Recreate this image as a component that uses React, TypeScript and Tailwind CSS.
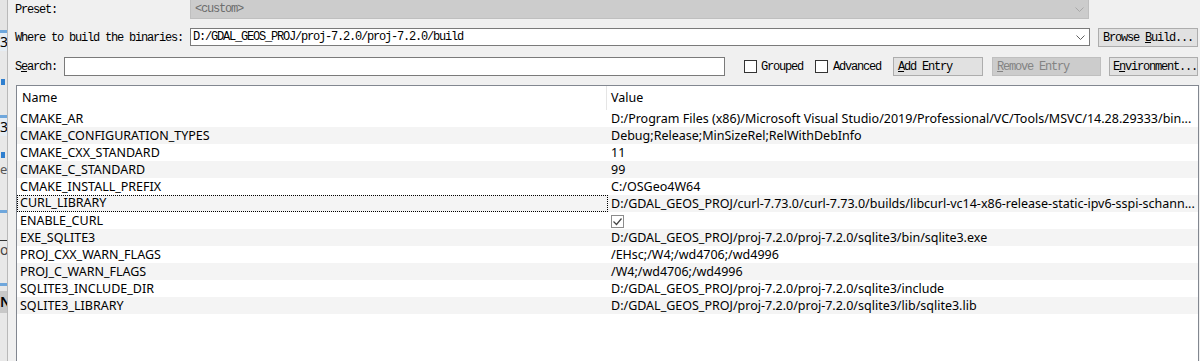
import React from "react";

const mono = "font-['Liberation_Mono',monospace] text-[12px] tracking-[-1.2px] text-black";
const sans = "font-['Noto_Sans',sans-serif] text-[12.5px] text-black";

function Chevron({ color }: { color: string }) {
  return (
    <svg width="9" height="5" viewBox="0 0 9 5" className="shrink-0">
      <polyline points="0.5,0.5 4.5,4.5 8.5,0.5" fill="none" stroke={color} strokeWidth="1" />
    </svg>
  );
}

function Check() {
  return (
    <div className="w-[13px] h-[13px] border border-[#8c8c8c] bg-white flex items-center justify-center">
      <svg width="11" height="11" viewBox="0 0 11 11">
        <polyline points="1.5,5.5 4.5,8.5 9.5,2.5" fill="none" stroke="#444" strokeWidth="1.2" />
      </svg>
    </div>
  );
}

const rows: [string, string | null][] = [
  ["CMAKE_AR", "D:/Program Files (x86)/Microsoft Visual Studio/2019/Professional/VC/Tools/MSVC/14.28.29333/bin..."],
  ["CMAKE_CONFIGURATION_TYPES", "Debug;Release;MinSizeRel;RelWithDebInfo"],
  ["CMAKE_CXX_STANDARD", "11"],
  ["CMAKE_C_STANDARD", "99"],
  ["CMAKE_INSTALL_PREFIX", "C:/OSGeo4W64"],
  ["CURL_LIBRARY", "D:/GDAL_GEOS_PROJ/curl-7.73.0/curl-7.73.0/builds/libcurl-vc14-x86-release-static-ipv6-sspi-schann..."],
  ["ENABLE_CURL", null],
  ["EXE_SQLITE3", "D:/GDAL_GEOS_PROJ/proj-7.2.0/proj-7.2.0/sqlite3/bin/sqlite3.exe"],
  ["PROJ_CXX_WARN_FLAGS", "/EHsc;/W4;/wd4706;/wd4996"],
  ["PROJ_C_WARN_FLAGS", "/W4;/wd4706;/wd4996"],
  ["SQLITE3_INCLUDE_DIR", "D:/GDAL_GEOS_PROJ/proj-7.2.0/proj-7.2.0/sqlite3/include"],
  ["SQLITE3_LIBRARY", "D:/GDAL_GEOS_PROJ/proj-7.2.0/proj-7.2.0/sqlite3/lib/sqlite3.lib"],
];

function Strip() {
  const seg = "w-full overflow-hidden font-['Noto_Sans',sans-serif] leading-none flex items-center shrink-0";
  return (
    <div className="w-[7px] shrink-0 h-full flex flex-col bg-[#e9e9e9]">
      <div className={`${seg} h-[30px] bg-[#e4e4e4]`} />
      <div className={`${seg} h-[3px] bg-[#6fa7dc]`} />
      <div className={`${seg} h-[18px] bg-[#e6edf4] text-black text-[14px]`}>3</div>
      <div className={`${seg} h-[28px] bg-[#e8e8e8]`} />
      <div className={`${seg} h-[6px] bg-[#e8e8e8] px-[1px]`}>
        <div className="w-[4px] h-[6px] bg-[#2f7fcf]" />
      </div>
      <div className={`${seg} h-[30px] bg-[#e8e8e8]`} />
      <div className={`${seg} h-[3px] bg-[#6fa7dc]`} />
      <div className={`${seg} h-[18px] bg-[#e6edf4] text-black text-[14px]`}>3</div>
      <div className={`${seg} h-[16px] bg-[#e8e8e8]`} />
      <div className={`${seg} h-[6px] bg-[#e8e8e8] px-[1px]`}>
        <div className="w-[4px] h-[6px] bg-[#2f7fcf]" />
      </div>
      <div className={`${seg} h-[4px] bg-[#e8e8e8]`} />
      <div className={`${seg} h-[14px] bg-[#e8e8e8] text-[#555] text-[13px]`}>e</div>
      <div className={`${seg} h-[34px] bg-[#e8e8e8]`} />
      <div className={`${seg} h-[3px] bg-[#6fa7dc]`} />
      <div className={`${seg} h-[27px] bg-[#e8e8e8]`} />
      <div className={`${seg} h-[1px] bg-[#333]`} />
      <div className={`${seg} h-[18px] bg-[#e8e8e8] text-[#444] text-[14px]`}>ol</div>
      <div className={`${seg} h-[24px] bg-[#e8e8e8]`} />
      <div className={`${seg} h-[3px] bg-[#6fa7dc]`} />
      <div className={`${seg} h-[5px] bg-[#e8e8e8]`} />
      <div className={`${seg} h-[22px] bg-[#c8c8c8] text-black font-semibold text-[14px]`}>N</div>
      <div className="flex-1 bg-[#e8e8e8]" />
    </div>
  );
}

export default function App() {
  return (
    <div className="w-[1200px] h-[361px] overflow-hidden flex bg-[#f0f0f0]">
      <Strip />
      <div className="w-px h-full bg-[#b9b9b9] shrink-0" />
      <div className="flex-1 flex flex-col pl-[7px] min-w-0">
        {/* Row 1 */}
        <div className="flex items-center h-[19px] shrink-0">
          <div className={`${mono} w-[175px] shrink-0`}>Preset:</div>
          <div className="w-[899px] h-[19px] bg-[#cccccc] border border-[#bfbfbf] border-t-0 flex items-center pl-[4px] pr-[4px]">
            <span className={`${mono} !text-[#6d6d6d] flex-1`}>&lt;custom&gt;</span>
            <Chevron color="#a8a8a8" />
          </div>
        </div>
        {/* Row 2 */}
        <div className="flex items-center h-[19px] mt-[9px] shrink-0">
          <div className={`${mono} w-[175px] shrink-0`}>Where to build the binaries:</div>
          <div className="w-[900px] h-[18px] self-start bg-white border border-[#7a7a7a] flex items-center pl-[2px] pr-[4px]">
            <span className={`${mono} flex-1`}>D:/GDAL_GEOS_PROJ/proj-7.2.0/proj-7.2.0/build</span>
            <Chevron color="#606060" />
          </div>
          <div className={`${mono} ml-[8px] w-[100px] h-[19px] bg-[#e1e1e1] border border-[#adadad] flex items-center pl-[4px]`}>
            Browse&nbsp;<u>B</u>uild...
          </div>
        </div>
        {/* Row 3 */}
        <div className="flex items-center h-[19px] mt-[10px] shrink-0">
          <div className={`${mono} w-[49px] shrink-0`}>
            S<u>e</u>arch:
          </div>
          <div className="w-[661px] h-[19px] bg-white border border-[#7a7a7a]" />
          <div className="ml-[19px] w-[13px] h-[13px] bg-white border border-[#333]" />
          <span className={`${mono} ml-[4px]`}>Grouped</span>
          <div className="ml-[12px] w-[13px] h-[13px] bg-white border border-[#333]" />
          <span className={`${mono} ml-[5px]`}>Advanced</span>
          <div className={`${mono} ml-[12px] w-[90px] h-[19px] bg-[#e1e1e1] border border-[#adadad] flex items-center pl-[4px]`}>
            <u>A</u>dd&nbsp;Entry
          </div>
          <div className={`${mono} !text-[#838383] ml-[9px] w-[109px] h-[19px] bg-[#cccccc] border border-[#bfbfbf] flex items-center pl-[4px]`}>
            <u>R</u>emove&nbsp;Entry
          </div>
          <div className={`${mono} ml-[8px] w-[89px] h-[19px] bg-[#e1e1e1] border border-[#adadad] flex items-center pl-[3px]`}>
            E<u>n</u>vironment...
          </div>
        </div>
        {/* Table */}
        <div className="mt-[9px] ml-[1px] w-[1183px] h-[300px] shrink-0 bg-white border border-[#828790] flex flex-col">
          <div className={`${sans} flex h-[24px] shrink-0`}>
            <div className="w-[590px] shrink-0 flex items-center pl-[5px] border-r border-[#e5e5e5]">Name</div>
            <div className="flex-1 flex items-center pl-[4px]">Value</div>
          </div>
          {rows.map(([name, value], i) => {
            const striped = i % 2 === 1;
            const focused = name === "CURL_LIBRARY";
            return (
              <div key={name} className={`${sans} flex h-[17px] shrink-0 pt-px ${striped ? "bg-[#f4f4f4]" : ""}`}>
                <div
                  className={`w-[591px] shrink-0 flex items-center whitespace-nowrap overflow-hidden ${
                    focused ? "border border-dotted border-black pl-[2px] -mt-px" : "pl-[3px]"
                  }`}
                >
                  {name}
                </div>
                <div className="flex-1 min-w-0 flex items-center pl-[3px] whitespace-nowrap overflow-hidden">
                  {value === null ? <Check /> : value}
                </div>
              </div>
            );
          })}
        </div>
      </div>
    </div>
  );
}
